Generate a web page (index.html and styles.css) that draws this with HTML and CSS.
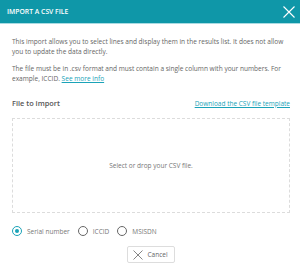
FILE: index.html
```html
<!DOCTYPE html>
<html>
<head>
<meta charset="utf-8">
<link rel="stylesheet" href="styles.css">
</head>
<body>
<div class="dialog">
  <div class="header">
    <span class="title">IMPORT A CSV FILE</span>
    <svg class="close" width="12" height="12" viewBox="0 0 12 12"><path d="M0.5 0.5 L11.5 11.5 M11.5 0.5 L0.5 11.5" stroke="#fff" stroke-width="1.1" fill="none"/></svg>
  </div>
  <div class="content">
    <p class="text">This import allows you to select lines and display them in the results list. It does not allow you to update the data directly.</p>
    <p class="text">The file must be in .csv format and must contain a single column with your numbers. For example, ICCID. <a class="link" href="#">See more info</a></p>
    <div class="file-row">
      <span class="label">File to import</span>
      <a class="link" href="#">Download the CSV file template</a>
    </div>
    <div class="drop">Select or drop your CSV file.</div>
    <div class="radios">
      <label class="radio"><span class="circle checked"></span>Serial number</label>
      <label class="radio"><span class="circle"></span>ICCID</label>
      <label class="radio"><span class="circle"></span>MSISDN</label>
    </div>
    <div class="actions">
      <button class="cancel"><svg width="10" height="10" viewBox="0 0 10 10"><path d="M0.5 0.5 L9.5 9.5 M9.5 0.5 L0.5 9.5" stroke="#666" stroke-width="0.8" fill="none"/></svg>Cancel</button>
    </div>
  </div>
</div>
</body>
</html>
```
FILE: styles.css
```css
* { box-sizing: border-box; }
html, body { margin: 0; padding: 0; background: #fff; }
body { font-family: "Open Sans", "Liberation Sans", sans-serif; color: #666; }
.dialog { width: 300px; height: 272px; }
.header {
  height: 24px;
  background: #0f97a8;
  border-bottom: 1px solid #a9dbe2;
  display: flex;
  align-items: center;
  justify-content: space-between;
  padding: 0 5px 0 7px;
}
.title { color: #fff; font-size: 6.8px; font-weight: 600; letter-spacing: 0; }
.close { display: block; }
.content { padding: 13px 10px 0 12px; }
.text { margin: 0 0 7px 0; font-size: 6.55px; line-height: 10px; color: #666; }
.link { color: #1aa3b8; text-decoration: underline; line-height: 1; }
.file-row { display: flex; justify-content: space-between; align-items: baseline; margin-top: 14px; }
.label { font-size: 7.4px; font-weight: 600; color: #555; }
.file-row .link { font-size: 6.5px; }
.drop {
  margin-top: 10px;
  height: 95px;
  border: 1px dashed #dcdcdc;
  display: flex;
  align-items: center;
  justify-content: center;
  font-size: 6.5px;
  color: #777;
}
.radios { display: flex; align-items: center; margin-top: 13px; gap: 8px; }
.radio { display: flex; align-items: center; gap: 5px; font-size: 6.5px; color: #777; }
.circle { width: 10px; height: 10px; border: 1px solid #666; border-radius: 50%; display: inline-block; position: relative; }
.circle.checked { border-color: #1aa3b8; }
.circle.checked::after { content: ""; position: absolute; left: 2px; top: 2px; width: 4px; height: 4px; border-radius: 50%; background: #1aa3b8; }
.actions { display: flex; justify-content: center; margin-top: 10px; }
.cancel {
  display: flex; align-items: center; gap: 4px;
  height: 17px; padding: 0 6px 0 5px;
  background: #fff; border: 1px solid #ddd; border-radius: 2px;
  font-family: "Open Sans", "Liberation Sans", sans-serif; font-size: 6.5px; color: #666;
}
.cancel svg { display: block; }
```
